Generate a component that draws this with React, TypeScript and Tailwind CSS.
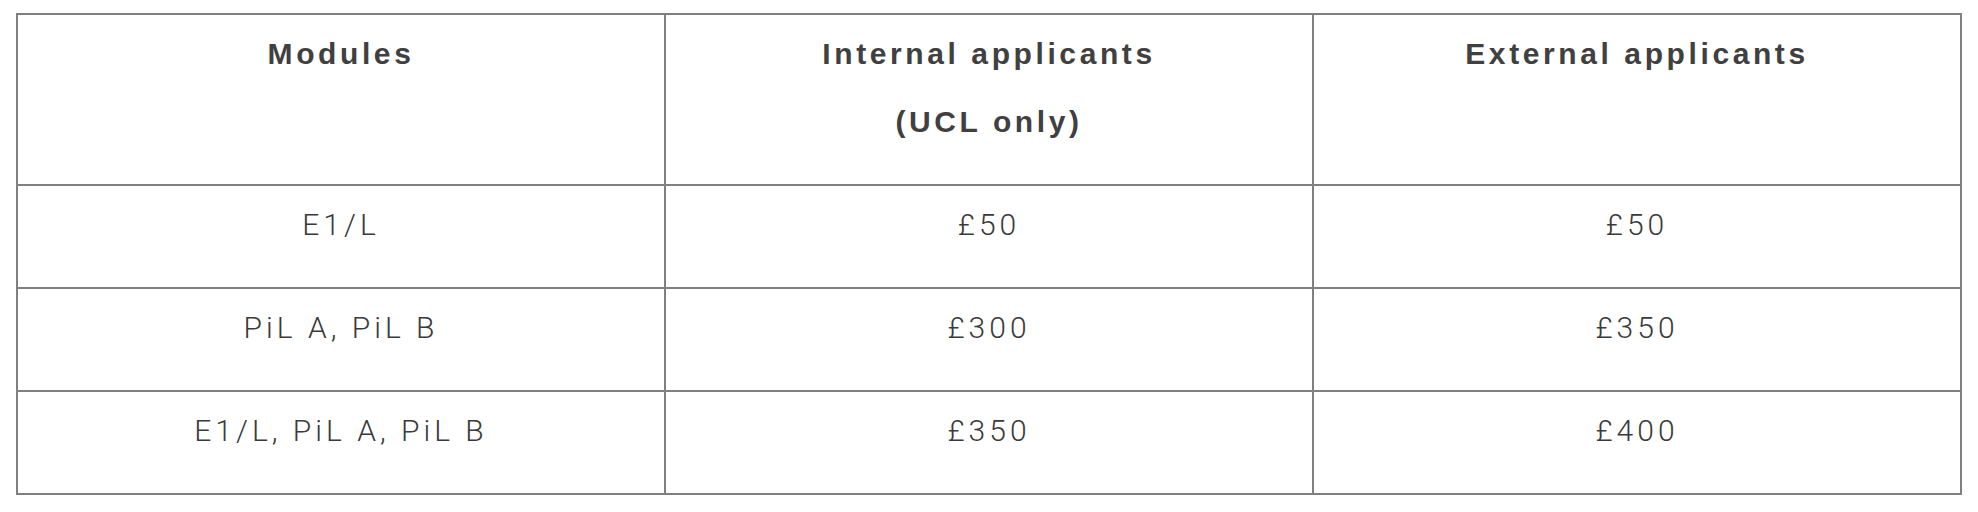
const rows = [
  { modules: "E1/L", internal: "£50", external: "£50" },
  { modules: "PiL A, PiL B", internal: "£300", external: "£350" },
  { modules: "E1/L, PiL A, PiL B", internal: "£350", external: "£400" },
];

const cell = "border-2 border-[#808080] text-center align-top pt-[5px] leading-[68px]";
const head = `${cell} pb-[28px] font-bold text-[30px] tracking-[3.6px] text-[#404040] font-['Liberation_Sans',Arial,sans-serif]`;
const body = `${cell} pb-[28px] font-light text-[30px] tracking-[4px] text-[#3a3a3a] font-['Roboto',sans-serif]`;

export default function App() {
  return (
    <div className="bg-white min-h-screen px-4 pt-[13px]">
      <table className="w-full table-fixed border-collapse border-2 border-[#808080]">
        <thead>
          <tr>
            <th className={head}>Modules</th>
            <th className={head}>
              Internal applicants
              <br />
              (UCL only)
            </th>
            <th className={head}>External applicants</th>
          </tr>
        </thead>
        <tbody>
          {rows.map((row) => (
            <tr key={row.modules}>
              <td className={body}>{row.modules}</td>
              <td className={body}>{row.internal}</td>
              <td className={body}>{row.external}</td>
            </tr>
          ))}
        </tbody>
      </table>
    </div>
  );
}
